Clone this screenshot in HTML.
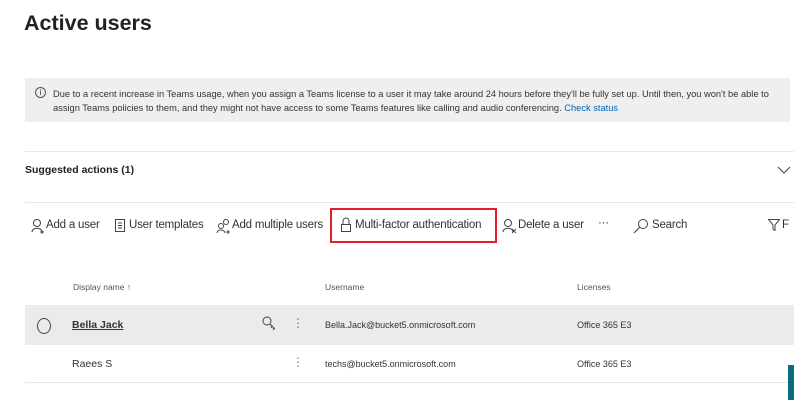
<!DOCTYPE html><html><head><style>
body{margin:0;width:794px;height:400px;overflow:hidden;background:#fff;font-family:"Liberation Sans",sans-serif;color:#222;position:relative}
.a{position:absolute;white-space:nowrap}
.t{font-size:11.5px;color:#333;top:219px;letter-spacing:-0.2px}
svg.a{fill:none;stroke:#444;stroke-width:1}
</style></head><body>
<div class="a" style="left:24px;top:11px;font-size:21.5px;font-weight:bold">Active users</div>
<div class="a" style="left:25px;top:78px;width:765px;height:44px;background:#efefef"></div>
<div class="a" style="left:35px;top:87px;width:9px;height:9px;border:1px solid #555;border-radius:50%;font-size:8px;text-align:center;line-height:9px">i</div>
<div class="a" style="left:53px;top:87px;font-size:9.3px;color:#333;line-height:14px">Due to a recent increase in Teams usage, when you assign a Teams license to a user it may take around 24 hours before they'll be fully set up. Until then, you won't be able to<br>assign Teams policies to them, and they might not have access to some Teams features like calling and audio conferencing. <span style="color:#0064b4">Check status</span></div>
<div class="a" style="left:25px;top:151px;width:769px;height:1px;background:#e8e8e8"></div>
<div class="a" style="left:25px;top:164px;font-size:10.5px;font-weight:bold">Suggested actions (1)</div>
<svg class="a" style="left:777px;top:166px" width="14" height="9"><path d="M1 1 L7 7 L13 1"/></svg>
<div class="a" style="left:25px;top:202px;width:769px;height:1px;background:#e8e8e8"></div>
<svg class="a" style="left:31px;top:218px" width="14" height="16"><circle cx="6" cy="5" r="3.5"/><path d="M1 14 C1 9 11 9 11 14 M11 12 V16 M9 14 H13"/></svg>
<div class="a t" style="left:46px">Add a user</div>
<svg class="a" style="left:115px;top:219px" width="10" height="13"><rect x="0.5" y="0.5" width="9" height="12"/><path d="M3 4H7M3 6.5H7M3 9H7"/></svg>
<div class="a t" style="left:129px">User templates</div>
<svg class="a" style="left:216px;top:218px" width="16" height="16"><circle cx="5" cy="8" r="2.5"/><circle cx="10" cy="4" r="2.5"/><path d="M1 15 C1 11 9 11 9 15 M12 12 V16 M10 14H14"/></svg>
<div class="a t" style="left:232px">Add multiple users</div>
<div class="a" style="left:330px;top:208px;width:163px;height:31px;border:2px solid #e0202a"></div>
<svg class="a" style="left:341px;top:217px" width="10" height="15"><path d="M2 7 V4 A3 3 0 0 1 8 4 V7"/><rect x="0.5" y="7.5" width="9" height="7"/></svg>
<div class="a t" style="left:355px">Multi-factor authentication</div>
<svg class="a" style="left:502px;top:218px" width="15" height="16"><circle cx="6" cy="5" r="3.5"/><path d="M1 14 C1 9 11 9 11 14 M10 11 L14 15 M14 11 L10 15"/></svg>
<div class="a t" style="left:518px">Delete a user</div>
<div class="a t" style="left:598px;top:217px">&middot;&middot;&middot;</div>
<svg class="a" style="left:633px;top:218px" width="16" height="16"><circle cx="10" cy="6" r="4.5"/><path d="M7 9 L1 15"/></svg>
<div class="a t" style="left:652px">Search</div>
<svg class="a" style="left:768px;top:219px" width="12" height="12"><path d="M0.5 0.5 H11.5 L7 6 V11.5 L5 10 V6 Z"/></svg>
<div class="a t" style="left:782px">F</div>
<div class="a" style="left:73px;top:282px;font-size:8.5px;color:#555">Display name &#8593;</div>
<div class="a" style="left:325px;top:282px;font-size:8.5px;color:#555">Username</div>
<div class="a" style="left:577px;top:282px;font-size:8.5px;color:#555">Licenses</div>
<div class="a" style="left:25px;top:305px;width:769px;height:40px;background:#ebebeb"></div>
<div class="a" style="left:37px;top:318px;width:12px;height:14px;border:1px solid #444;border-radius:50%"></div>
<div class="a" style="left:72px;top:319px;font-size:10.5px;text-decoration:underline;font-weight:bold;color:#333">Bella Jack</div>
<svg class="a" style="left:262px;top:316px" width="14" height="15"><circle cx="5" cy="5" r="4"/><path d="M8 8 L13 13 M10 10 L9 12 M12 12 L11 14"/></svg>
<div class="a" style="left:292px;top:316px;font-size:12px;color:#777">&#8942;</div>
<div class="a" style="left:325px;top:320px;font-size:9px;color:#333">Bella.Jack@bucket5.onmicrosoft.com</div>
<div class="a" style="left:577px;top:320px;font-size:9px;color:#333">Office 365 E3</div>
<div class="a" style="left:72px;top:358px;font-size:10.5px;color:#333">Raees S</div>
<div class="a" style="left:292px;top:355px;font-size:12px;color:#777">&#8942;</div>
<div class="a" style="left:325px;top:359px;font-size:9px;color:#333">techs@bucket5.onmicrosoft.com</div>
<div class="a" style="left:577px;top:359px;font-size:9px;color:#333">Office 365 E3</div>
<div class="a" style="left:25px;top:382px;width:769px;height:1px;background:#e8e8e8"></div>
<div class="a" style="left:788px;top:365px;width:6px;height:35px;background:#0b6a80"></div>
</body></html>
